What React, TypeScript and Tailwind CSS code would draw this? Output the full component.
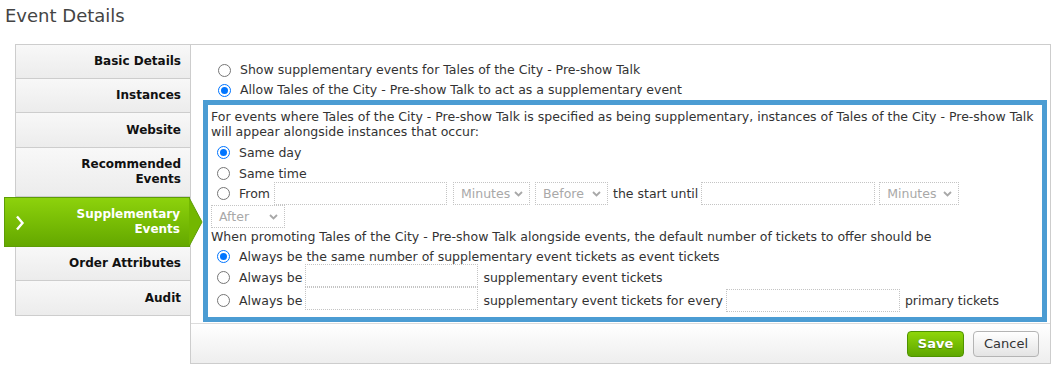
import type { ReactNode } from 'react'

const navItems = [
  { label: 'Basic Details', h: 'h-[35px]' },
  { label: 'Instances', h: 'h-[34px]' },
  { label: 'Website', h: 'h-[35px]' },
  { label: 'Recommended Events', h: 'h-[49px]' },
  { label: 'Supplementary Events', h: 'h-[50px]', active: true },
  { label: 'Order Attributes', h: 'h-[34px]' },
  { label: 'Audit', h: 'h-[35px]' },
]

const Radio = ({ checked = false }: { checked?: boolean }) => (
  <span
    className={`inline-flex shrink-0 w-[13px] h-[13px] rounded-full border items-center justify-center bg-white ${
      checked ? 'border-[#0075ff]' : 'border-[#767676]'
    }`}
  >
    {checked && <span className="w-[7px] h-[7px] rounded-full bg-[#0075ff]" />}
  </span>
)

const TextBox = ({ w }: { w: string }) => (
  <span className={`inline-block shrink-0 h-[23px] border border-dotted border-[#c4c4c4] bg-white ${w}`} />
)

const Select = ({ label, w }: { label: string; w: string }) => (
  <span
    className={`inline-flex shrink-0 items-center justify-between h-[23px] pl-[7px] pr-[6px] border border-dotted border-[#c4c4c4] text-[#a8a8a8] ${w}`}
  >
    {label}
    <svg width="9" height="6" viewBox="0 0 9 6" className="mt-[1px] ml-[3px]">
      <path d="M1 1l3.5 3.5L8 1" fill="none" stroke="#a8a8a8" strokeWidth="1.8" />
    </svg>
  </span>
)

const Option = ({ checked, children, h = 'h-[20px]' }: { checked?: boolean; children: ReactNode; h?: string }) => (
  <div className={`flex items-center ${h} pl-[6px]`}>
    <Radio checked={checked} />
    <div className="flex items-center ml-[9px]">{children}</div>
  </div>
)

const App = () => {
  return (
    <div className="w-[1055px] h-[368px] bg-white text-[#333] text-[12px] font-['DejaVu_Sans',sans-serif] overflow-hidden">
      <h1 className="h-[44px] pl-[5px] pt-[4px] text-[18px] leading-[24px] text-[#444]">Event Details</h1>

      <div className="flex">
        {/* sidebar */}
        <div className="w-[175px] ml-[15px] flex flex-col">
          {navItems.map((item) =>
            item.active ? (
              <div
                key={item.label}
                className={`relative z-10 -ml-[11px] w-[186px] ${item.h} flex items-center justify-end pr-[9px] border border-[#5d9d06] bg-gradient-to-b from-[#8dd20c] to-[#64a800] text-white font-bold text-right leading-[15px]`}
              >
                <svg width="10" height="16" viewBox="0 0 10 16" className="absolute left-[10px] top-[17px]">
                  <path d="M2 1.5l5.5 6.5L2 14.5" fill="none" stroke="#fff" strokeWidth="2.4" />
                </svg>
                <span className="w-[125px]">Supplementary Events</span>
                <svg width="14" height="50" viewBox="0 0 14 50" className="absolute -right-[14px] -top-px">
                  <path d="M0 0.5L13 25L0 49.5" fill="#73b700" stroke="#5d9d06" strokeWidth="1" />
                </svg>
              </div>
            ) : (
              <div
                key={item.label}
                className={`${item.h} flex items-center justify-end pr-[9px] border-l border-b border-[#cdcdcd] first:border-t bg-gradient-to-b from-[#f8f8f8] to-[#ececec] text-[#111] font-bold text-right leading-[15px]`}
              >
                <span className="w-[125px]">{item.label === 'Recommended Events' ? <>Recommended<br />Events</> : item.label}</span>
              </div>
            )
          )}
        </div>

        {/* main panel */}
        <div className="w-[861px] border border-[#cdcdcd] flex flex-col text-[12.5px]">
          <div className="pt-[15px]">
            <div className="pl-[21px]">
              <Option>Show supplementary events for Tales of the City - Pre-show Talk</Option>
              <Option checked h="h-[20px]">
                Allow Tales of the City - Pre-show Talk to act as a supplementary event
              </Option>
            </div>

            <div className="ml-[12px] mr-[3px] border-[5px] border-[#4b9cd3] pl-[3px] pt-[4px] pb-[5px] leading-[15px]">
              <p className="pr-[4px] whitespace-nowrap">
                For events where Tales of the City - Pre-show Talk is specified as being supplementary, instances of Tales of
                the City - Pre-show Talk
                <br />
                will appear alongside instances that occur:
              </p>
              <div className="mt-[3px]">
                <Option checked h="h-[21px]">Same day</Option>
                <Option>Same time</Option>
                <Option h="h-[21px]">
                  <span>From</span>
                  <span className="ml-[4px] flex items-center">
                    <TextBox w="w-[173px]" />
                    <span className="ml-[6px]"><Select label="Minutes" w="w-[77px]" /></span>
                    <span className="ml-[5px]"><Select label="Before" w="w-[73px]" /></span>
                    <span className="ml-[5px] mr-[3px]">the start until</span>
                    <TextBox w="w-[174px]" />
                    <span className="ml-[4px]"><Select label="Minutes" w="w-[80px]" /></span>
                  </span>
                </Option>
                <div className="flex items-center h-[25px]">
                  <Select label="After" w="w-[74px]" />
                </div>
              </div>
              <p className="whitespace-nowrap">
                When promoting Tales of the City - Pre-show Talk alongside events, the default number of tickets to offer should be
              </p>
              <div className="mt-[2px]">
                <Option checked>Always be the same number of supplementary event tickets as event tickets</Option>
                <Option h="h-[22px]">
                  <span>Always be</span>
                  <span className="ml-[3px]"><TextBox w="w-[173px]" /></span>
                  <span className="ml-[5px]">supplementary event tickets</span>
                </Option>
                <Option h="h-[24px]">
                  <span>Always be</span>
                  <span className="ml-[3px]"><TextBox w="w-[173px]" /></span>
                  <span className="ml-[5px] mr-[3px]">supplementary event tickets for every</span>
                  <TextBox w="w-[174px]" />
                  <span className="ml-[5px]">primary tickets</span>
                </Option>
              </div>
            </div>
          </div>

          <div className="h-[40px] mt-px border-t border-[#dcdcdc] bg-gradient-to-b from-white to-[#eeeeee] flex items-center justify-end gap-[9px] pr-[11px]">
            <button className="w-[57px] h-[26px] rounded-[4px] border border-[#4f9300] bg-gradient-to-b from-[#8fd60a] to-[#5ea700] text-white font-bold text-[13px] [text-shadow:0_1px_1px_rgba(0,0,0,0.3)]">
              Save
            </button>
            <button className="w-[66px] h-[26px] rounded-[4px] border border-[#b4b4b4] bg-gradient-to-b from-white to-[#e4e4e4] text-[#333] text-[13px]">
              Cancel
            </button>
          </div>
        </div>
      </div>
    </div>
  )
}

export default App
